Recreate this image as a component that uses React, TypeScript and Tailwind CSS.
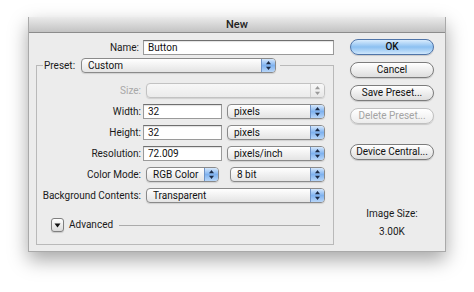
import React from "react";

function Arrows({ disabled }: { disabled?: boolean }) {
  const c = disabled ? "#9a9a9a" : "#1b2a44";
  return (
    <svg width="7" height="11" viewBox="0 0 7 11">
      <path d="M3.5 1 L6 4.2 L1 4.2 Z" fill={c} />
      <path d="M3.5 10 L6 6.8 L1 6.8 Z" fill={c} />
    </svg>
  );
}

function Popup({
  className,
  label,
  disabled,
}: {
  className: string;
  label?: string;
  disabled?: boolean;
}) {
  return (
    <div
      className={
        "flex h-[15px] rounded-[4px] border overflow-hidden shadow-[0_1px_1px_rgba(0,0,0,0.12)] " +
        (disabled
          ? "border-[#c2c2c2] bg-gradient-to-b from-[#f7f7f7] to-[#ebebeb] "
          : "border-[#8a8a8a] bg-gradient-to-b from-white to-[#e4e4e4] ") +
        className
      }
    >
      <div className="flex-1 pl-[6px] text-[10px] leading-[13px] text-[#111] whitespace-nowrap">{label}</div>
      <div
        className={
          "w-[14px] flex items-center justify-center border-l " +
          (disabled
            ? "border-[#d0d0d0] bg-gradient-to-b from-[#f8f8f8] to-[#e8e8e8]"
            : "border-[#6f93c6] bg-gradient-to-b from-[#d6e8fc] via-[#7fb2ef] to-[#b8d6f8]")
        }
      >
        <Arrows disabled={disabled} />
      </div>
    </div>
  );
}

function Field({ className, value }: { className: string; value: string }) {
  return (
    <div
      className={
        "h-[15px] bg-white border border-[#9a9a9a] border-t-[#6f6f6f] pl-[4px] text-[10px] leading-[13px] text-[#111] shadow-[inset_0_1px_1px_rgba(0,0,0,0.12)] " +
        className
      }
    >
      {value}
    </div>
  );
}

function Btn({ label, primary, disabled }: { label: string; primary?: boolean; disabled?: boolean }) {
  return (
    <div
      className={
        "w-[84px] h-[16px] rounded-full border flex items-center justify-center text-[10px] leading-[14px] whitespace-nowrap shadow-[0_1px_1px_rgba(0,0,0,0.15)] " +
        (primary
          ? "border-[#4f74a8] bg-gradient-to-b from-[#d9ecfd] via-[#8cc0f1] to-[#cfe7fc] text-[#111] font-medium"
          : disabled
          ? "border-[#c0c0c0] bg-gradient-to-b from-white to-[#ececec] text-[#a4a4a4]"
          : "border-[#7c7c7c] bg-gradient-to-b from-white to-[#dedede] text-[#111]")
      }
    >
      {label}
    </div>
  );
}

function Row({ label, children, disabled }: { label: string; children: React.ReactNode; disabled?: boolean }) {
  return (
    <div className="flex items-center h-[21px]">
      <div
        className={
          "w-[104px] flex justify-end whitespace-nowrap text-[10px] leading-[14px] " +
          (disabled ? "text-[#a8a8a8]" : "text-[#1a1a1a]")
        }
      >
        <span>{label}</span>
      </div>
      {children}
    </div>
  );
}

export default function App() {
  return (
    <div
      className="w-[474px] h-[292px] bg-white pt-[17px] pl-[28px]"
      style={{ fontFamily: "Roboto, 'Liberation Sans', sans-serif" }}
    >
      <div className="w-[418px] h-[235px] flex flex-col bg-[#ececec] border-x border-b border-[#a9a9a9] shadow-[0_8px_18px_rgba(0,0,0,0.35)]">
        <div className="h-[16px] flex items-center justify-center bg-gradient-to-b from-[#ebebeb] to-[#c3c3c3] border-b border-[#8c8c8c] text-[11px] leading-[14px] text-[#222] font-medium">
          New
        </div>
        <div className="flex flex-1">
          <div className="pl-[7px] w-[305px] flex flex-col">
            <div className="flex items-center h-[15px] mt-[7px]">
              <div className="w-[103px] text-right text-[10px] leading-[14px] text-[#1a1a1a]">Name:</div>
              <Field className="ml-[4px] w-[191px]" value="Button" />
            </div>
            <fieldset className="mt-[3px] w-[298px] border border-[#b9b9b9] pb-[12px]">
              <legend className="ml-[6px] pl-[1px] pr-[4px] flex items-center">
                <span className="text-[10px] leading-[14px] text-[#1a1a1a]">Preset:</span>
                <Popup className="ml-[6px] w-[195px]" label="Custom" />
              </legend>
              <div className="mt-[7px] flex flex-col">
                <Row label="Size:" disabled>
                  <Popup className="ml-[5px] w-[179px]" disabled />
                </Row>
                <Row label="Width:">
                  <Field className="ml-[2px] w-[79px]" value="32" />
                  <Popup className="ml-[5px] w-[98px]" label="pixels" />
                </Row>
                <Row label="Height:">
                  <Field className="ml-[2px] w-[79px]" value="32" />
                  <Popup className="ml-[5px] w-[98px]" label="pixels" />
                </Row>
                <Row label="Resolution:">
                  <Field className="ml-[2px] w-[79px]" value="72.009" />
                  <Popup className="ml-[5px] w-[98px]" label="pixels/inch" />
                </Row>
                <Row label="Color Mode:">
                  <Popup className="ml-[5px] w-[73px]" label="RGB Color" />
                  <Popup className="ml-[11px] w-[95px]" label="8 bit" />
                </Row>
                <Row label="Background Contents:">
                  <Popup className="ml-[5px] w-[179px]" label="Transparent" />
                </Row>
              </div>
              <div className="mt-[12px] flex items-center h-[14px]">
                <div className="ml-[14px] w-[13px] h-[14px] rounded-[3px] border border-[#7f7f7f] bg-gradient-to-b from-white to-[#dadada] flex items-center justify-center shadow-[0_1px_1px_rgba(0,0,0,0.15)]">
                  <svg width="7" height="5" viewBox="0 0 7 5">
                    <path d="M0.5 0.5 L6.5 0.5 L3.5 4.5 Z" fill="#111" />
                  </svg>
                </div>
                <span className="ml-[5px] text-[10px] leading-[14px] text-[#1a1a1a]">Advanced</span>
                <div className="flex-1 ml-[6px] mr-[13px] h-px bg-[#ababab]" />
              </div>
            </fieldset>
          </div>
          <div className="ml-[16px] flex flex-col items-center w-[84px]">
            <div className="mt-[6px] flex flex-col gap-[7px]">
              <Btn label="OK" primary />
              <Btn label="Cancel" />
              <Btn label="Save Preset..." />
              <Btn label="Delete Preset..." disabled />
            </div>
            <div className="mt-[20px]">
              <Btn label="Device Central..." />
            </div>
            <div className="mt-[45px] text-[10px] leading-[18px] text-[#1a1a1a] text-center">
              <div>Image Size:</div>
              <div>3.00K</div>
            </div>
          </div>
        </div>
      </div>
    </div>
  );
}
